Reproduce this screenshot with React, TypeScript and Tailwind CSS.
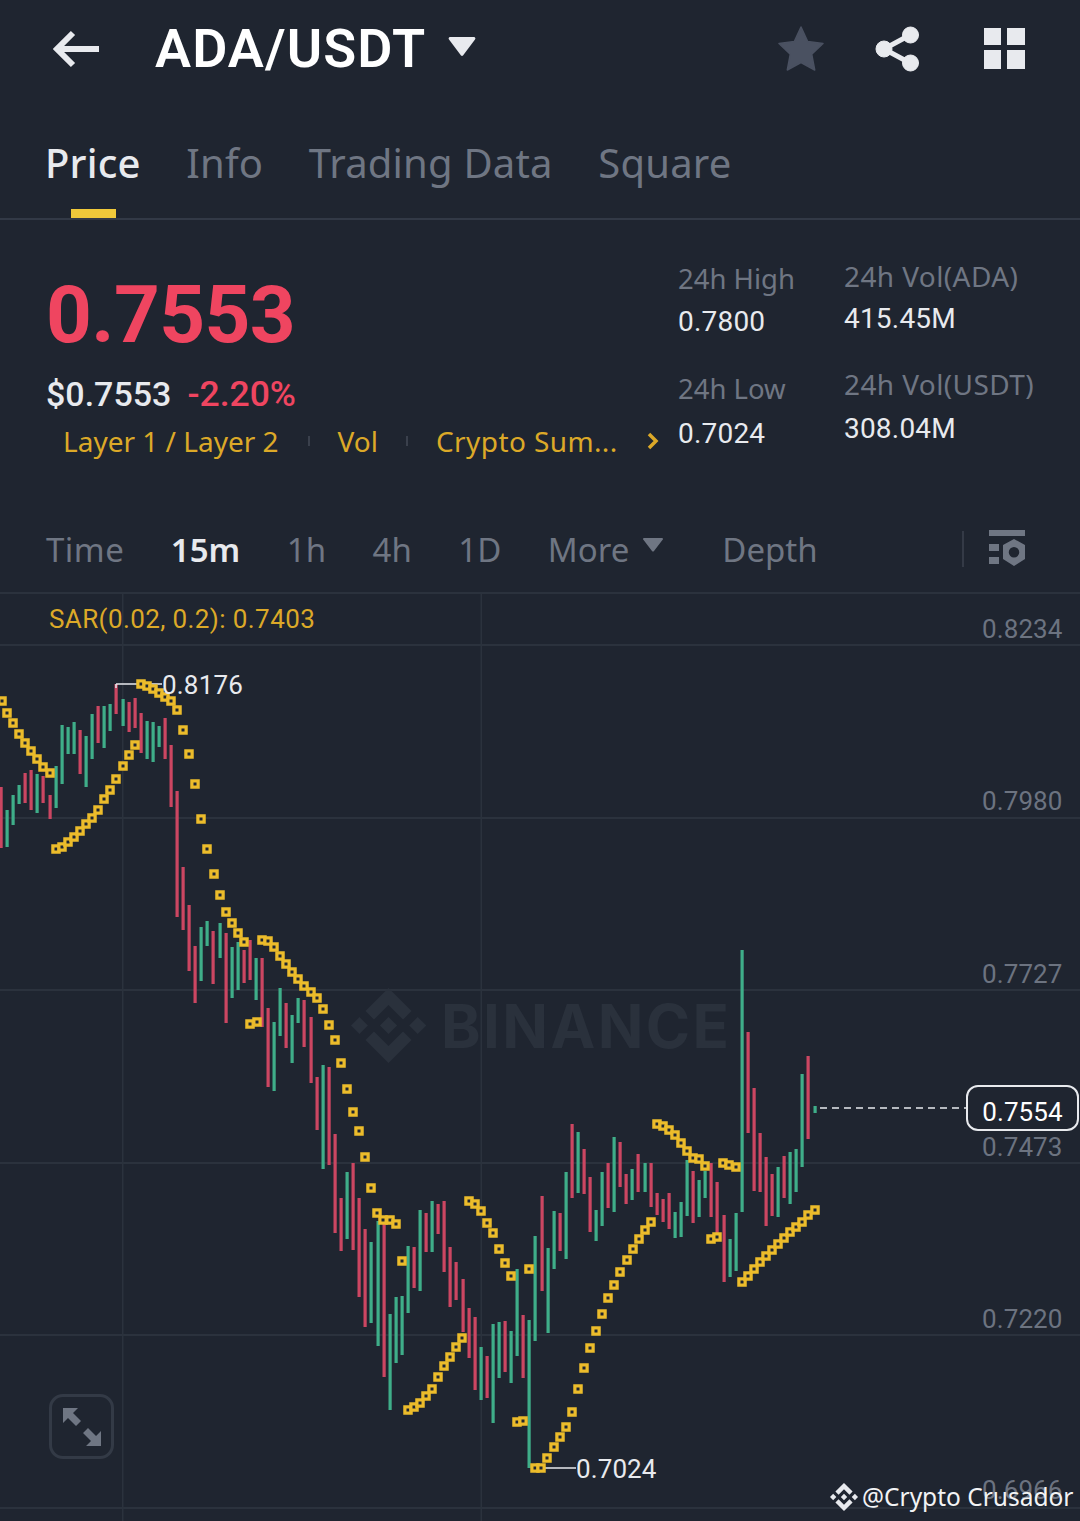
import React from "react";

const candles: [number, number, number, number][] = [
[1,787,848,0],[7,810,847,1],[13,795,825,1],[19,785,804,1],[25,773,803,0],[31,770,810,0],[37,774,813,1],[43,776,803,0],[50,795,819,0],[56,766,808,1],
[62,725,784,1],[68,727,754,1],[74,722,754,1],[80,730,774,0],[86,736,787,1],[92,714,759,1],[98,706,743,0],[104,706,748,1],[110,704,731,1],[116,684,714,0],
[123,699,726,1],[129,702,732,0],[135,698,728,0],[141,713,753,0],[147,721,759,1],[153,722,762,1],[159,726,747,1],[165,718,759,0],[171,745,807,0],[177,791,917,0],
[183,867,930,0],[189,905,971,0],[195,946,1003,0],[201,927,981,1],[207,921,946,1],[213,931,984,0],[220,923,958,1],[226,933,1023,0],[232,947,998,1],[238,942,990,1],
[244,950,983,0],[250,940,980,0],[256,958,1000,1],[262,958,1027,0],[268,1008,1087,0],[274,1022,1091,1],[280,988,1036,1],[286,1003,1048,0],[292,1015,1063,1],[298,998,1023,1],
[304,1000,1047,0],[311,1017,1083,0],[317,1077,1130,0],[323,1065,1169,1],[329,1067,1165,0],[335,1134,1233,0],[341,1198,1251,0],[347,1172,1239,1],[353,1163,1250,0],[359,1198,1297,0],
[365,1229,1327,0],[371,1242,1323,1],[378,1221,1346,1],[384,1224,1377,0],[390,1314,1410,1],[396,1297,1363,1],[402,1296,1355,1],[408,1246,1313,1],[414,1247,1288,0],[420,1210,1291,1],
[426,1213,1252,0],[432,1201,1252,1],[438,1204,1234,0],[444,1201,1272,0],[450,1247,1307,0],[456,1262,1300,0],[463,1279,1332,0],[469,1308,1358,0],[475,1317,1390,0],[481,1347,1400,1],
[487,1356,1398,0],[493,1324,1423,1],[499,1322,1378,1],[505,1321,1372,0],[511,1331,1383,1],[517,1269,1356,1],[523,1315,1378,0],[529,1320,1468,1],[535,1236,1341,1],[542,1196,1291,0],
[548,1248,1333,1],[554,1211,1269,1],[560,1213,1251,0],[566,1172,1259,1],[572,1124,1198,0],[578,1132,1193,1],[584,1149,1194,0],[590,1177,1232,0],[596,1210,1241,1],[602,1172,1226,1],
[608,1163,1208,0],[614,1137,1212,1],[620,1142,1187,0],[626,1174,1204,0],[632,1169,1200,1],[638,1154,1192,0],[645,1163,1192,1],[651,1163,1207,0],[657,1193,1215,0],[663,1199,1222,0],
[669,1193,1229,0],[675,1212,1238,1],[681,1202,1237,1],[687,1160,1216,1],[693,1171,1223,0],[699,1180,1217,1],[705,1171,1198,1],[711,1163,1217,0],[717,1182,1233,0],[724,1215,1282,0],
[730,1239,1277,1],[736,1213,1271,1],[742,950,1212,1],[748,1032,1133,0],[754,1088,1191,0],[760,1133,1192,0],[766,1157,1226,0],[772,1174,1216,0],[778,1167,1217,1],[784,1156,1198,0],
[790,1152,1204,1],[796,1149,1192,1],[802,1074,1167,1],[808,1056,1139,0],[815,1106,1113,1],
];

const dots: [number, number][] = [
[2,701],[7,713],[13,723],[19,734],[25,743],[31,751],[37,759],[43,767],[50,773],
[56,849],[62,847],[68,842],[74,837],[80,831],[86,824],[92,818],[98,810],[104,799],[110,790],[116,779],[123,766],[129,755],[135,745],
[141,684],[147,686],[153,689],[159,693],[165,697],[171,701],[177,710],[183,730],[189,754],[195,784],[201,819],[207,849],[214,874],[220,895],[226,912],[232,923],[238,933],[244,942],
[250,1024],[257,1022],
[262,940],[268,941],[274,947],[280,956],[286,964],[292,972],[298,979],[304,986],[311,992],[317,998],[323,1009],[329,1025],[335,1040],[341,1063],[347,1089],[353,1112],[359,1131],[365,1157],[371,1188],[377,1213],[383,1220],[390,1220],[396,1224],
[402,1261],
[408,1410],[414,1407],[420,1403],[426,1396],[432,1389],[438,1377],[444,1366],[450,1357],[456,1347],[462,1338],
[469,1201],[475,1204],[481,1211],[487,1223],[493,1233],[499,1249],[505,1263],[511,1276],
[529,1269],[517,1422],[523,1421],
[535,1468],[541,1468],[547,1458],[554,1447],[560,1437],[566,1427],[572,1412],[578,1389],[584,1368],[590,1348],[596,1331],[602,1314],[608,1298],[614,1285],[620,1272],[627,1260],[633,1249],[639,1239],[645,1230],[651,1222],
[657,1124],[663,1126],[669,1130],[675,1135],[681,1143],[687,1151],[693,1158],[699,1159],[705,1166],
[711,1239],[717,1237],
[723,1163],[729,1165],[736,1167],
[742,1282],[748,1276],[754,1269],[760,1262],[766,1256],[772,1250],[778,1244],[784,1238],[790,1232],[796,1227],[802,1222],[808,1215],[815,1210],
];

const hLines = [645, 818, 990, 1163, 1335, 1508];
const axis: [string, string][] = [
  ["0.8234", "top-[18px]"],
  ["0.7980", "top-[190px]"],
  ["0.7727", "top-[363px]"],
  ["0.7473", "top-[536px]"],
  ["0.7220", "top-[708px]"],
  ["0.6966", "top-[879px]"],
];
const num = "font-['Roboto',sans-serif]";

function BinanceMark({ size, color, className }: { size: number; color: string; className?: string }) {
  return (
    <svg width={size} height={size} viewBox="0 0 126.61 126.61" className={className} fill={color}>
      <path d="M38.73 53.2L63.3 28.63l24.59 24.59 14.3-14.3L63.3 0 24.43 38.9z" />
      <path d="M0 63.31l14.3-14.3 14.3 14.3-14.3 14.3z" />
      <path d="M38.73 73.41L63.3 97.98l24.59-24.59 14.31 14.29-38.9 38.93-38.87-38.87z" />
      <path d="M98.28 63.31l14.3-14.3 14.3 14.3-14.3 14.3z" />
      <path d="M77.83 63.3L63.3 48.78 52.57 59.51l-1.24 1.23-2.53 2.54 14.5 14.5L77.83 63.3z" />
    </svg>
  );
}

function Header() {
  return (
    <div className="flex h-[98px] items-center pl-[53px] pr-[55px] text-white">
      <svg width="46" height="38" viewBox="0 0 46 38" fill="none" stroke="#e8eaee" strokeWidth="6" strokeLinejoin="miter">
        <path d="M46 19H5" />
        <path d="M20 3L4 19l16 16" />
      </svg>
      <span className="ml-[56px] font-['Roboto',sans-serif] text-[54px] font-semibold leading-none tracking-[1.1px]">ADA/USDT</span>
      <svg width="28" height="21" viewBox="0 0 28 21" className="ml-[22px] mb-[6px]" fill="#e8eaee">
        <path d="M2 1h24a1.5 1.5 0 0 1 1 2.5L15 19.5a1.500 1.500 0 0 1-2 0L1 3.500A1.500 1.500 0 0 1 2 1z" />
      </svg>
      <div className="flex-1" />
      <svg width="46" height="47" viewBox="0 0 46 47" fill="#4a5161">
        <path d="M23 1l6.700 14.500 15.300 2-11.300 10.700 3 15.800L23 36.500 9.300 44l3-15.800L1 17.500l15.300-2z" strokeLinejoin="round" stroke="#4a5161" strokeWidth="1.500" />
      </svg>
      <svg width="44" height="46" viewBox="0 0 44 46" className="ml-[51px]" fill="#e8eaee" stroke="#e8eaee">
        <circle cx="35.500" cy="9" r="8" />
        <circle cx="9" cy="23" r="8" />
        <circle cx="35.500" cy="37" r="8" />
        <path d="M35 9L9 23l26 14" fill="none" strokeWidth="5" />
      </svg>
      <div className="ml-[65px] mb-[2px] grid grid-cols-2 gap-x-[5px] gap-y-[5px]">
        <div className="h-[17px] w-[17px] bg-[#e8eaee]" />
        <div className="h-[17px] w-[18px] bg-[#e8eaee]" />
        <div className="h-[19px] w-[17px] bg-[#e8eaee]" />
        <div className="h-[19px] w-[18px] bg-[#e8eaee]" />
      </div>
    </div>
  );
}

function Tabs() {
  return (
    <div className="flex h-[122px] items-start gap-[45.500px] border-b-2 border-[#323946] pl-[45px] pt-[40px] font-['Noto_Sans',sans-serif] text-[40px] leading-[50px] tracking-[0.2px] text-[#6f7683] ">
      <span className="relative h-[80px] font-medium text-[#e8eaee]">
        Price
        <span className="absolute left-[26px] top-[71px] h-[9px] w-[45px] bg-[#f0c93a]" />
      </span>
      <span>Info</span>
      <span>Trading Data</span>
      <span>Square</span>
    </div>
  );
}

function Stat({ label, value, gap, inner, track }: { label: string; value: string; gap: string; inner: string; track: string }) {
  return (
    <div className={gap}>
      <div className={`font-['Noto_Sans',sans-serif] leading-[36px] text-[#6f7683] ${track}`}>{label}</div>
      <div className={`${num} ${inner} text-[28px] leading-[36px] tracking-[0.2px] text-[#e8eaee]`}>{value}</div>
    </div>
  );
}

function Summary() {
  return (
    <div className="flex h-[290px]">
      <div className="w-[678px] pl-[46px] pt-[50px]">
        <div className={`${num} text-[80px] font-bold leading-[90px] tracking-[-0.6px] text-[#ef4560]`}>0.7553</div>
        <div className={`${num} mt-[13px] flex items-center gap-[16px] font-medium leading-[42px]`}>
          <span className="text-[34px] text-[#e8eaee]">$0.7553</span>
          <span className="text-[35.500px] text-[#ef4560]">-2.20%</span>
        </div>
        <div className="mt-[6px] flex items-center pl-[17px] font-['Noto_Sans',sans-serif] text-[28px] leading-[40px] text-[#dca928]">
          <span>Layer 1 / Layer 2</span>
          <span className="ml-[29px] h-[10px] w-[2px] bg-[#3a404c]" />
          <span className="ml-[28px]">Vol</span>
          <span className="ml-[28px] h-[10px] w-[2px] bg-[#3a404c]" />
          <span className="ml-[28px] tracking-[0.4px]">Crypto Sum...</span>
          <svg width="14" height="18" viewBox="0 0 14 18" className="ml-[28px]" fill="none" stroke="#dca928" strokeWidth="3.500">
            <path d="M3 2l7 7-7 7" />
          </svg>
        </div>
      </div>
      <div className="w-[166px] pt-[41px]">
        <Stat label="24h High" value="0.7800" gap="" inner="mt-[7px]" track="text-[27.500px]" />
        <Stat label="24h Low" value="0.7024" gap="mt-[31px]" inner="mt-[9px]" track="text-[27.500px]" />
      </div>
      <div className="flex-1 pt-[38px]">
        <Stat label="24h Vol(ADA)" value="415.45M" gap="" inner="mt-[7px]" track="text-[28px] tracking-[0.4px]" />
        <Stat label="24h Vol(USDT)" value="308.04M" gap="mt-[29px]" inner="mt-[9px]" track="text-[28px] tracking-[0.4px]" />
      </div>
    </div>
  );
}

function TimeBar() {
  return (
    <div className="flex h-[84px] items-center border-b-2 border-[#2b323d] pl-[46px] pr-[54px] pb-[4px] font-['Noto_Sans',sans-serif] text-[33px] leading-none text-[#6f7683]">
      <div className="flex items-center gap-[46.500px]">
        <span className="tracking-[0.5px]">Time</span>
        <span className="font-semibold text-[#e8eaee]">15m</span>
        <span>1h</span>
        <span>4h</span>
        <span>1D</span>
        <span className="flex items-center">
          More
          <svg width="20" height="14" viewBox="0 0 20 14" className="mb-[8px] ml-[14px]" fill="#6f7683">
            <path d="M1 0h18a1 1 0 0 1 .8 1.600L11 13a1.300 1.300 0 0 1-2 0L.200 1.600A1 1 0 0 1 1 0z" />
          </svg>
        </span>
      </div>
      <span className="ml-[59px]">Depth</span>
      <div className="flex-1" />
      <div className="mr-[25px] h-[36px] w-[2px] bg-[#343a46]" />
      <svg width="37" height="38" viewBox="0 0 37 38" fill="#6f7683">
        <rect x="0" y="0" width="36" height="6" />
        <rect x="0" y="14" width="10" height="7" />
        <rect x="0" y="27" width="10" height="7" />
        <path fillRule="evenodd" d="M25 9l11 6v14l-11 7-11-7V15zM25 17a5 5 0 1 0 0 10.500A5 5 0 0 0 25 17z" />
      </svg>
    </div>
  );
}

function Chart() {
  return (
    <div className="relative flex-1 overflow-hidden">
      <svg width="1080" height="927" viewBox="0 594 1080 927" className="block">
        {hLines.map((y) => (
          <rect key={y} x="0" y={y - 1} width="1080" height="2" fill="#2b323d" />
        ))}
        <rect x="122" y="594" width="1.500" height="927" fill="#2b323d" />
        <rect x="480.500" y="594" width="1.500" height="927" fill="#2b323d" />
        {candles.map(([x, a, b, g]) => (
          <rect key={x} x={x - 1.5} y={a} width="3.200" height={b - a} fill={g ? "#3fae89" : "#cc4662"} />
        ))}
        <path d="M116 684h46" stroke="#e8eaee" strokeWidth="1.500" />
        <path d="M116 684v4" stroke="#e8eaee" strokeWidth="1.500" />
        <path d="M540 1468h36" stroke="#e8eaee" strokeWidth="1.500" />
        <path d="M820 1108h146" stroke="#e8eaee" strokeWidth="1.500" strokeDasharray="7 5" />
        {dots.map(([x, y]) => (
          <g key={`${x}-${y}`}>
            <rect x={x - 4.75} y={y - 4.75} width="9.500" height="9.500" fill="#ecbc2b" />
            <rect x={x - 1.5} y={y - 1.5} width="3" height="3" fill="#1f2530" />
          </g>
        ))}
      </svg>

      <div className="absolute left-[351px] top-[394px] flex items-center">
        <BinanceMark size={75} color="#2a313c" />
        <span className="ml-[15px] font-['Inter',sans-serif] text-[60px] font-bold leading-none tracking-[2.400px] text-[#2a313c]">BINANCE</span>
      </div>

      <div className={`${num} absolute left-[49px] top-[8px] text-[26px] leading-[34px] tracking-[0.4px] text-[#dca928]`}>SAR(0.02, 0.2): 0.7403</div>
      <div className={`${num} absolute left-[162px] top-[74px] text-[26px] leading-[34px] tracking-[0.2px] text-[#e8eaee]`}>0.8176</div>
      <div className={`${num} absolute left-[576px] top-[858px] text-[26px] leading-[34px] tracking-[0.1px] text-[#e8eaee]`}>0.7024</div>

      {axis.map(([v, pos]) => (
        <div key={v} className={`${num} absolute left-[982px] ${pos} text-[26px] leading-[34px] tracking-[0.1px] text-[#6c7380]`}>{v}</div>
      ))}

      <div className={`${num} absolute left-[966px] top-[491px] flex h-[46px] w-[113px] items-center justify-center rounded-[12px] border-2 border-[#e8eaee] bg-[#1f2530] pt-[8px] text-[26px] tracking-[0.1px] text-[#ffffff]`}>0.7554</div>

      <div className="absolute left-[49px] top-[800px] flex h-[65px] w-[65px] items-center justify-center rounded-[14px] border-[3px] border-[#333a46]">
        <svg width="40" height="40" viewBox="0 0 40 40" fill="#6f7683">
          <path d="M1 1h15l-5 5 8 8-5 5-8-8-5 5z" />
          <path d="M39 39H24l5-5-8-8 5-5 8 8 5-5z" />
        </svg>
      </div>

      <div className="absolute left-[830px] top-[887px] flex w-[250px] items-center whitespace-nowrap">
        <BinanceMark size={28} color="#e8eaee" />
        <span className="ml-[4px] font-['Noto_Sans',sans-serif] text-[24.500px] leading-[32px] text-[#f2f3f5]">@Crypto Crusador</span>
      </div>
    </div>
  );
}

export default function App() {
  return (
    <div className="flex h-[1521px] w-[1080px] flex-col overflow-hidden bg-[#1f2530]">
      <Header />
      <Tabs />
      <Summary />
      <TimeBar />
      <Chart />
    </div>
  );
}
